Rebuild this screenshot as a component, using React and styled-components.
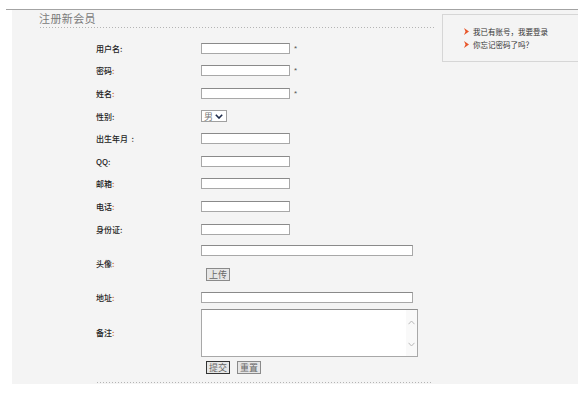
import React from 'react';
import styled, { createGlobalStyle } from 'styled-components';

const GlobalStyle = createGlobalStyle`
  html, body {
    margin: 0;
    padding: 0;
    background: #ffffff;
  }
  body {
    font-family: "Noto Sans CJK SC", "Liberation Sans", sans-serif;
    color: #222;
  }
`;

const Pagina = styled.div`
  padding-top: 9px;
  width: 578px;
  overflow: hidden;
`;

const LinhaTopo = styled.div`
  margin-left: 6px;
  border-top: 1.5px solid #a3a3a3;
`;

const Painel = styled.div`
  margin-left: 6px;
  background: #f4f4f4;
  display: flex;
  align-items: flex-start;
  overflow: hidden;
`;

const Coluna = styled.div`
  width: 424px;
  flex-shrink: 0;
  padding-bottom: 1px;
`;

const Titulo = styled.div`
  margin-left: 27px;
  margin-right: 1px;
  font-size: 11px;
  line-height: 16px;
  color: #7a7a7a;
  letter-spacing: 0.4px;
  padding-bottom: 0.5px;
`;

const Pontilhado = styled.div`
  height: 1px;
  margin-left: ${p => p.$inicio}px;
  width: ${p => p.$largura}px;
  margin-top: ${p => p.$topo || 0}px;
  background: repeating-linear-gradient(to right, #b4b4b4 0 1px, transparent 1px 3px);
`;

const Formulario = styled.form`
  margin-left: 84px;
  margin-top: 9.5px;
  display: flex;
  flex-direction: column;
`;

const Linha = styled.div`
  display: flex;
  align-items: center;
  height: ${p => p.$altura}px;
`;

const Rotulo = styled.label`
  width: 105px;
  flex-shrink: 0;
  font-size: 8px;
  font-weight: 500;
  color: #222;
  white-space: pre;
`;

const DoisPontos = styled.span`
  color: ${p => (p.$destaque ? '#c8641e' : '#333')};
`;

const Campo = styled.div`
  display: flex;
  flex-direction: column;
  align-items: flex-start;
  gap: ${p => p.$espaco || 0}px;
`;

const Entrada = styled.input`
  box-sizing: border-box;
  width: ${p => p.$largura || 89}px;
  height: 11px;
  padding: 0 2px;
  margin: 0;
  border: 1px solid #a8a8a8;
  border-top-color: #8a8a8a;
  background: #fff;
  font-size: 8px;
  outline: none;
`;

const Asterisco = styled.span`
  margin-left: 4px;
  font-size: 8px;
  color: #555;
  font-family: "Liberation Sans", sans-serif;
`;

const Seletor = styled.div`
  position: relative;
  box-sizing: border-box;
  width: 26px;
  height: 12px;
  border: 1px solid #a0a0a0;
  background: #fff;
  display: flex;
  align-items: center;
  padding-left: 2px;
  font-size: 9px;
  color: #777;
  line-height: 1;
`;

const Seta = styled.svg`
  position: absolute;
  right: 3px;
  top: 3px;
`;

const Botao = styled.button`
  box-sizing: border-box;
  width: ${p => p.$largura || 24}px;
  height: 13px;
  padding: 0;
  margin: 0;
  font-size: 9px;
  line-height: 1;
  font-family: "Noto Sans CJK SC", sans-serif;
  color: #666;
  background: #e6e6e6;
  border: ${p => (p.$foco ? '1.5px solid #333' : '1px solid #8a8a8a')};
  cursor: pointer;
`;

const GrupoBotoes = styled.div`
  display: flex;
  gap: 7px;
  padding-left: 5px;
`;

const CaixaTexto = styled.div`
  box-sizing: border-box;
  width: 217px;
  height: 48px;
  display: flex;
  border: 1px solid #a8a8a8;
  border-top-color: #8f8f8f;
  background: #fff;
`;

const AreaTexto = styled.textarea`
  flex: 1;
  border: none;
  resize: none;
  outline: none;
  margin: 0;
  padding: 2px;
  font-size: 8px;
  background: transparent;
`;

const BarraRolagem = styled.div`
  width: 11px;
  background: #f9f9f9;
  display: flex;
  flex-direction: column;
  align-items: center;
  justify-content: space-between;
  padding: 10px 0 9px;
`;

const Lateral = styled.div`
  margin-left: 6px;
  margin-top: 3.5px;
  width: 150px;
  height: 48px;
  flex-shrink: 0;
  box-sizing: border-box;
  border: 1px solid #d6d6d6;
  background: #f4f4f4;
  padding: 10px 0 0 21px;
`;

const ItemLateral = styled.div`
  display: flex;
  align-items: center;
  height: 13.5px;
  font-size: 7.5px;
  color: #333;
  white-space: nowrap;
`;

const Marcador = styled.svg`
  margin-right: 4px;
  flex-shrink: 0;
`;

const campos = [
  { nome: '用户名', destaque: false, obrigatorio: true },
  { nome: '密码', destaque: true, obrigatorio: true },
  { nome: '姓名', destaque: true, obrigatorio: true },
  { nome: '性别', destaque: false, tipo: 'select' },
  { nome: '出生年月 ', destaque: false, espacoDoisPontos: true },
  { nome: 'QQ', destaque: false },
  { nome: '邮箱', destaque: true },
  { nome: '电话', destaque: true },
  { nome: '身份证', destaque: false },
];

function Chevron({ cima }) {
  return (
    <svg width="7" height="5" viewBox="0 0 7 5">
      <path
        d={cima ? 'M0.5 4.2 L3.5 1 L6.5 4.2' : 'M0.5 0.8 L3.5 4 L6.5 0.8'}
        fill="none"
        stroke="#b8b8b8"
        strokeWidth="1"
      />
    </svg>
  );
}

function App() {
  return (
    <Pagina>
      <GlobalStyle />
      <LinhaTopo>
        <Painel>
          <Coluna>
            <Titulo>注册新会员</Titulo>
            <Pontilhado $inicio={28} $largura={396} />

            <Formulario onSubmit={e => e.preventDefault()}>
              {campos.map(c => (
                <Linha key={c.nome} $altura={22.6}>
                  <Rotulo>
                    {c.nome}
                    <DoisPontos $destaque={c.destaque}>{c.espacoDoisPontos ? ' :' : ':'}</DoisPontos>
                  </Rotulo>
                  {c.tipo === 'select' ? (
                    <Seletor>
                      男
                      <Seta width="8" height="5" viewBox="0 0 8 5">
                        <path d="M0.8 0.8 L4 4 L7.2 0.8" fill="none" stroke="#1c2a4a" strokeWidth="1.6" />
                      </Seta>
                    </Seletor>
                  ) : (
                    <Entrada type="text" />
                  )}
                  {c.obrigatorio && <Asterisco>*</Asterisco>}
                </Linha>
              ))}

              <Linha $altura={45.6}>
                <Rotulo>
                  头像<DoisPontos $destaque>:</DoisPontos>
                </Rotulo>
                <Campo $espaco={12}>
                  <Entrada type="text" $largura={212} />
                  <GrupoBotoes>
                    <Botao type="button">上传</Botao>
                  </GrupoBotoes>
                </Campo>
              </Linha>

              <Linha $altura={23}>
                <Rotulo>
                  地址<DoisPontos $destaque>:</DoisPontos>
                </Rotulo>
                <Entrada type="text" $largura={212} />
              </Linha>

              <Linha $altura={48}>
                <Rotulo>
                  备注<DoisPontos $destaque>:</DoisPontos>
                </Rotulo>
                <CaixaTexto>
                  <AreaTexto />
                  <BarraRolagem>
                    <Chevron cima />
                    <Chevron />
                  </BarraRolagem>
                </CaixaTexto>
              </Linha>

              <Linha $altura={22}>
                <Rotulo />
                <GrupoBotoes>
                  <Botao type="submit" $foco>提交</Botao>
                  <Botao type="reset">重置</Botao>
                </GrupoBotoes>
              </Linha>
            </Formulario>

            <Pontilhado $inicio={85} $largura={336} $topo={3} />
          </Coluna>

          <Lateral>
            <ItemLateral>
              <Marcador width="5" height="7" viewBox="0 0 5 7">
                <path d="M0 0 L5 3.5 L0 7 L1.5 3.5 Z" fill="#e8562a" />
              </Marcador>
              我已有账号，我要登录
            </ItemLateral>
            <ItemLateral>
              <Marcador width="5" height="7" viewBox="0 0 5 7">
                <path d="M0 0 L5 3.5 L0 7 L1.5 3.5 Z" fill="#e8562a" />
              </Marcador>
              你忘记密码了吗？
            </ItemLateral>
          </Lateral>
        </Painel>
      </LinhaTopo>
    </Pagina>
  );
}

export default App;
